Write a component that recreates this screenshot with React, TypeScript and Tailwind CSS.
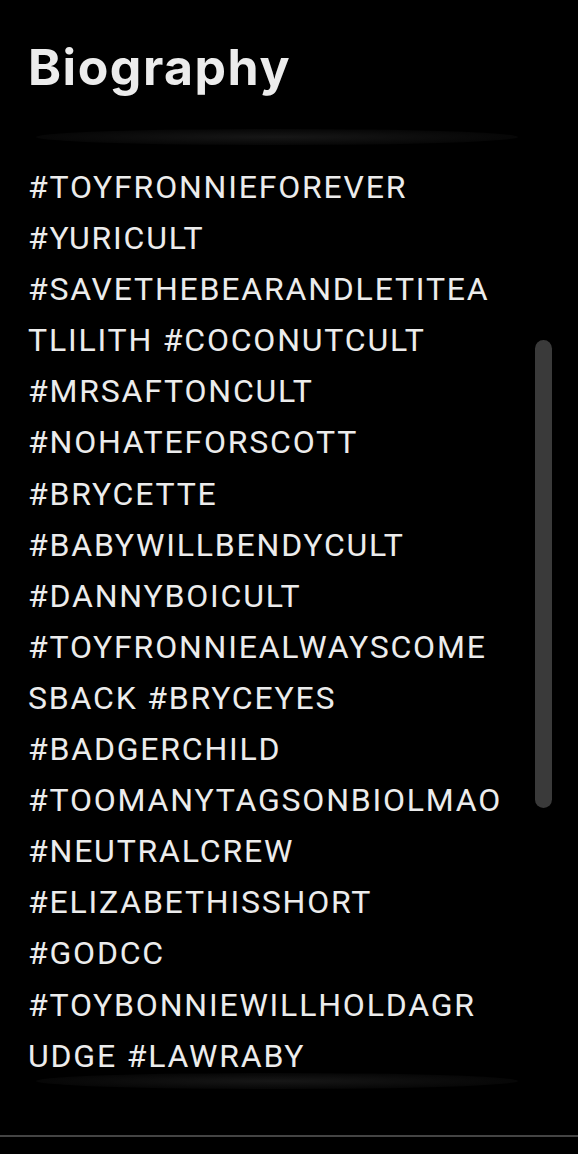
// bio wraps exactly as the profile shows it
const bioLines = [
    "#TOYFRONNIEFOREVER",
    "#YURICULT",
    "#SAVETHEBEARANDLETITEA",
    "TLILITH #COCONUTCULT",
    "#MRSAFTONCULT",
    "#NOHATEFORSCOTT",
    "#BRYCETTE",
    "#BABYWILLBENDYCULT",
    "#DANNYBOICULT",
    "#TOYFRONNIEALWAYSCOME",
    "SBACK #BRYCEYES",
    "#BADGERCHILD",
    "#TOOMANYTAGSONBIOLMAO",
    "#NEUTRALCREW",
    "#ELIZABETHISSHORT",
    "#GODCC",
    "#TOYBONNIEWILLHOLDAGR",
    "UDGE #LAWRABY",
]

const Glow = () => (
    <div className="h-[16px] ml-[36px] mr-[60px] rounded-[50%] bg-[radial-gradient(ellipse_at_center,#171717_0%,#0b0b0b_50%,#000_100%)]" />
)

export default function App() {
    return (
        <div className="relative w-[578px] h-[1154px] bg-black overflow-hidden font-['Roboto',sans-serif]">
            <div className="pt-[35px] px-[28px]">
                <h1 className="font-['Inter',sans-serif] text-[50px] leading-[64px] font-bold text-[#ececec] tracking-[1.5px]">Biography</h1>
            </div>
            <div className="mt-[30px]">
                <Glow />
            </div>
            <div className="pl-[28px] pt-[17px]">
                <div className="text-[32px] leading-[51.1px] text-[#ececec] tracking-[1.8px] whitespace-nowrap">
                    {bioLines.map((line, i) => (
                        <div key={i}>{line}</div>
                    ))}
                </div>
            </div>
            <div className="-mt-[9px]">
                <Glow />
            </div>
            <div className="absolute left-0 right-0 top-[1135px] h-[2px] bg-[#444]" />
            <div className="absolute left-[535px] top-[340px] w-[17px] h-[468px] rounded-full bg-[#3a3a3a]" />
        </div>
    )
}
